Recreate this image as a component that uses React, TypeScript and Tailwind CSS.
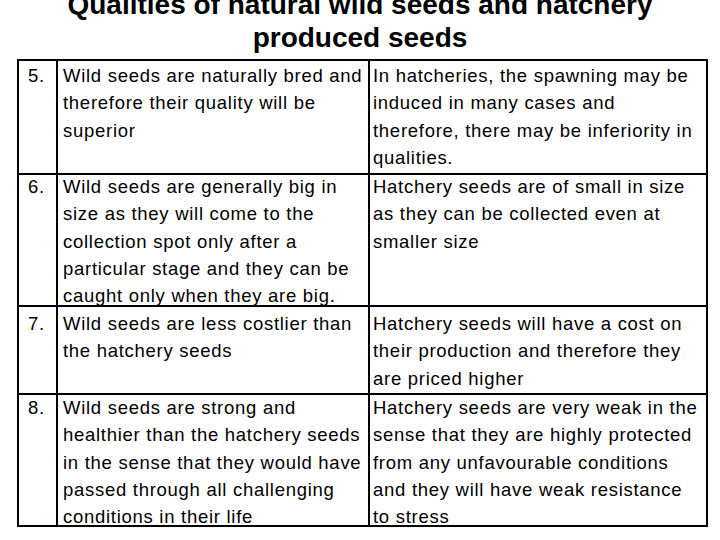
import React from "react";

type Row = {
  num: string;
  left: string[];
  right: string[];
  h: string;
  pt: string;
  border: boolean;
};

const rows: Row[] = [
  {
    num: "5.",
    left: ["Wild seeds are naturally bred and", "therefore their quality will be", "superior"],
    right: [
      "In hatcheries, the spawning may be",
      "induced in many cases and",
      "therefore, there may be inferiority in",
      "qualities.",
    ],
    h: "h-[112px]",
    pt: "mt-[1px]",
    border: false,
  },
  {
    num: "6.",
    left: [
      "Wild seeds are generally big in",
      "size as they will come to the",
      "collection spot only after a",
      "particular stage and they can be",
      "caught only when they are big.",
    ],
    right: ["Hatchery seeds are of small in size", "as they can be collected even at", "smaller size"],
    h: "h-[132px]",
    pt: "-mt-[2px]",
    border: true,
  },
  {
    num: "7.",
    left: ["Wild seeds are less costlier than", "the hatchery seeds"],
    right: ["Hatchery seeds will have a cost on", "their production and therefore they", "are priced higher"],
    h: "h-[88px]",
    pt: "mt-[3px]",
    border: true,
  },
  {
    num: "8.",
    left: [
      "Wild seeds are strong and",
      "healthier than the hatchery seeds",
      "in the sense that they would have",
      "passed through all challenging",
      "conditions in their life",
    ],
    right: [
      "Hatchery seeds are very weak in the",
      "sense that they are highly protected",
      "from any unfavourable conditions",
      "and they will have weak resistance",
      "to stress",
    ],
    h: "h-[132px]",
    pt: "-mt-[1px]",
    border: true,
  },
];

function Lines({ lines, pt }: { lines: string[]; pt: string }) {
  return (
    <div className={pt}>
      {lines.map((l, i) => (
        <div key={i} className="whitespace-nowrap">
          {l}
        </div>
      ))}
    </div>
  );
}

export default function App() {
  return (
    <div
      className="w-[720px] h-[540px] overflow-hidden bg-white text-black"
      style={{ fontFamily: '"Liberation Sans", Arial, sans-serif' }}
    >
      <div className="-mt-[12px] text-center font-bold text-[28px] leading-[33px]">
        <div>Qualities of natural wild seeds and hatchery</div>
        <div>produced seeds</div>
      </div>
      <div className="mt-[5px] ml-[17px] w-[691px] border-2 border-black text-[18.5px] leading-[27.3px] tracking-[0.72px]">
        {rows.map((r) => (
          <div
            key={r.num}
            className={`flex ${r.h} ${r.border ? "border-t-2 border-black" : ""}`}
          >
            <div className="w-[37px] shrink-0 pl-[9px]">
              <Lines lines={[r.num]} pt={r.pt} />
            </div>
            <div className="w-[312px] shrink-0 border-l-2 border-black pl-[5px]">
              <Lines lines={r.left} pt={r.pt} />
            </div>
            <div className="w-[338px] shrink-0 border-l-2 border-black pl-[3px]">
              <Lines lines={r.right} pt={r.pt} />
            </div>
          </div>
        ))}
      </div>
    </div>
  );
}
